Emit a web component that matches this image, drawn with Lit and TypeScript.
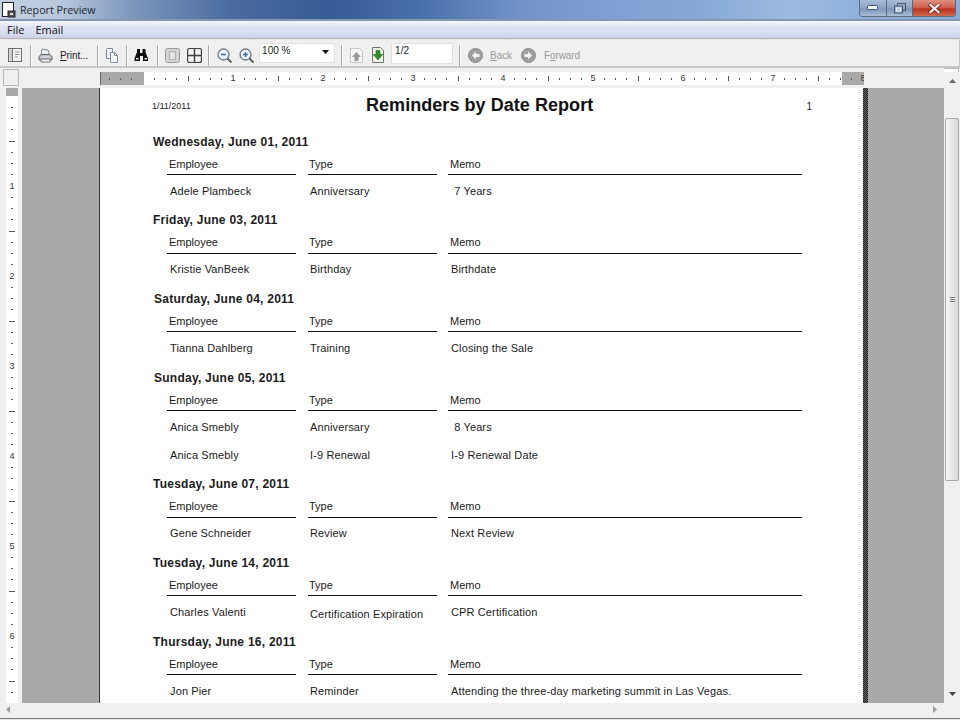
import { LitElement, html, css, svg } from "lit";
import { customElement } from "lit/decorators.js";

type Row = [string, string, string, string?];
interface Group { date: string; shift?: boolean; rows: Row[]; }

const GROUPS: Group[] = [
  { date: "Wednesday, June 01, 2011", rows: [["Adele Plambeck", "Anniversary", " 7 Years"]] },
  { date: "Friday, June 03, 2011", rows: [["Kristie VanBeek", "Birthday", "Birthdate"]] },
  { date: "Saturday, June 04, 2011", shift: true, rows: [["Tianna Dahlberg", "Training", "Closing the Sale"]] },
  { date: "Sunday, June 05, 2011", shift: true, rows: [["Anica Smebly", "Anniversary", " 8 Years"], ["Anica Smebly", "I-9 Renewal", "I-9 Renewal Date"]] },
  { date: "Tuesday, June 07, 2011", rows: [["Gene Schneider", "Review", "Next Review"]] },
  { date: "Tuesday, June 14, 2011", rows: [["Charles Valenti", "Certification Expiration", "CPR Certification", "low"]] },
  { date: "Thursday, June 16, 2011", rows: [["Jon Pier", "Reminder", "Attending the three-day marketing summit in Las Vegas."]] },
];

function tickKind(k: number) {
  if (k % 8 === 0) return "num";
  if (k % 4 === 0) return "half";
  return "dot";
}

@customElement("app-root")
export class AppRoot extends LitElement {
  static styles = css`
    :host { display: flex; flex-direction: column; width: 960px; height: 720px; overflow: hidden; background: #f0f0f0; font-family: "Liberation Sans", Arial, sans-serif; color: #1c1c1c; }
    svg { display: block; flex: none; }

    .titlebar { height: 21px; flex: none; display: flex; align-items: flex-start; box-sizing: border-box; border-bottom: 2px solid #8497b0;
      background: linear-gradient(90deg, #c3d0e2 0, #b9c9de 60px, #7e98bd 130px, #4a6c9f 230px, #375b94 330px, #4a70aa 420px, #7193c8 520px, #7d9fd2 600px, #86a9d8 700px, #9dbbe0 790px, #8fb1dc 860px, #8aacd8 960px); }
    .app-icon { margin: 2px 0 0 2px; }
    .win-title { margin: 3px 0 0 4px; font: 10.7px/14px "Open Sans", sans-serif; color: #1e2630; }
    .win-btns { margin-left: auto; margin-right: 4px; display: flex; height: 16px; border: 1px solid #5a6b80; border-top: 0; border-radius: 0 0 4px 4px; overflow: hidden; }
    .wbtn { height: 16px; display: flex; align-items: center; justify-content: center; background: linear-gradient(#a9bdd8, #8ba3c4 50%, #7b95b8 55%, #a8bdd6); }
    .wbtn.min { width: 26px; border-right: 1px solid #5a6b80; }
    .wbtn.max { width: 25px; border-right: 1px solid #5a6b80; }
    .wbtn.close { width: 42px; background: linear-gradient(#dd9080, #cf5a46 50%, #b8301c 55%, #cf6a50); }

    .menubar { height: 17px; flex: none; display: flex; gap: 11px; padding-left: 7px; align-items: center; border-bottom: 1px solid #b4b4b8; background: linear-gradient(#f4f6fb 0, #dfe4f4 35%, #d4daee 80%, #ccd2e4 100%); font: 11px/15px "Open Sans", sans-serif; color: #111; }

    .toolbar { height: 22px; padding-top: 4px; flex: none; display: flex; align-items: center; border-top: 1px solid #e8e8e8; border-right: 1px solid #c4c4c4; border-bottom: 2px solid #c8c8c8; background: #f0f0f0; padding-left: 8px; }
    .sep { width: 1px; height: 21px; background: #aaa; box-shadow: 1px 0 0 #fff; flex: none; }
    .lbl { font-size: 10px; letter-spacing: -0.1px; color: #222; white-space: nowrap; }
    .lbl.dis { color: #9a9a9a; }
    .lbl u { text-underline-offset: 1px; }
    .box { background: #fff; height: 20px; box-sizing: border-box; border: 1px solid #e2e2e2; font-size: 10px; line-height: 14px; padding-left: 2px; color: #222; display: flex; flex: none; margin-top: -5px; }
    .combo { width: 76px; }
    .combo svg { margin: 6px 5px 0 auto; }
    .pager { width: 62px; height: 21px; padding-left: 3px; margin-top: -3px; }

    .workspace { flex: 1; min-height: 0; display: flex; }
    .content { flex: 1; min-width: 0; display: flex; flex-direction: column; }

    .rulerrow { height: 20px; flex: none; display: flex; background: #f0f0f0; }
    .corner { width: 14px; height: 15px; margin: 1px 0 0 3px; border: 1px solid #b8b8b8; background: #f0f0f0; flex: none; }
    .hruler { margin: 4px 0 0 81px; width: 764px; height: 13px; background: #fff; position: relative; display: flex; overflow: hidden; }
    .hcells { display: flex; margin-left: 3.625px; position: relative; z-index: 1; }
    .hc { width: 11.25px; flex: none; display: flex; align-items: center; justify-content: center; font-size: 9px; line-height: 13px; color: #333; }
    .dot { width: 1px; height: 2px; background: #555; }
    .half { width: 1px; height: 5px; background: #555; }
    .grayL, .grayR { position: absolute; top: 0; bottom: 0; background: #a9a9a9; }
    .grayL { left: 0; width: 44px; border-left: 1px solid #666; box-sizing: border-box; }
    .grayR { right: 0; width: 22px; }

    .body { flex: 1; min-height: 0; display: flex; overflow: hidden; }
    .vruler { width: 22px; flex: none; box-sizing: border-box; padding-left: 6px; background: #f0f0f0; overflow: hidden; }
    .vinner { width: 12px; height: 100%; background: #fff; }
    .vgray { height: 8px; background: #a9a9a9; }
    .vcells { margin-top: -5.625px; }
    .vc { height: 11.25px; display: flex; align-items: center; justify-content: center; font-size: 9px; line-height: 11px; color: #333; }
    .vdot { width: 2px; height: 1px; background: #555; }
    .vhalf { width: 6px; height: 1px; background: #555; }

    .area { flex: 1; min-width: 0; background: #a9a9a9; padding-left: 77px; overflow: hidden; }
    .page { display: flex; width: 769px; min-height: 100%; background: #fff; border-left: 1px solid #333; box-sizing: border-box; color: #1a1a1a; }
    .sheet { width: 763px; flex: none; }
    .edge { width: 5px; flex: none; background: repeating-conic-gradient(#1e1e1e 0 25%, #6a6a6a 0 50%) 0 0 / 2px 2px; }
    .rep-head { display: grid; grid-template-columns: 214px auto 1fr; height: 42.7px; padding: 0 50px 0 52px; box-sizing: border-box; }
    .rep-date { font-size: 9px; line-height: 12px; padding-top: 12px; }
    .rep-title { font-size: 18px; font-weight: 700; letter-spacing: 0.05px; line-height: 22px; padding-top: 6px; color: #111; }
    .rep-no { font-size: 10px; line-height: 12px; padding-top: 13px; text-align: right; padding-right: 1px; }

    .group { padding: 0 0 3.7px 53px; }
    .g-date { height: 22px; line-height: 22.4px; font-size: 12px; font-weight: 700; letter-spacing: 0.25px; color: #1c1c1c; }
    .g-date.shift { padding-left: 1px; }
    .colhead { display: grid; grid-template-columns: 141px 140px 354px; height: 22.3px; margin: 0 0 2.7px 14px; }
    .colhead div { font-size: 11px; line-height: 22.2px; height: 22.3px; box-sizing: border-box; border-bottom: 1px solid #111; padding-left: 2px; }
    .colhead .c1 { margin-right: 12px; }
    .colhead .c2 { margin-right: 11px; padding-left: 1px; }
    .row { display: grid; grid-template-columns: 141px 140px 354px; height: 28px; margin-left: 14px; font-size: 11px; letter-spacing: 0.13px; line-height: 27.2px; white-space: pre; }
    .row > div { padding-left: 3px; }
    .row > .c2 { padding-left: 2px; }
    .row.low > .c2 { padding-top: 1.5px; }

    .vscroll { width: 16px; flex: none; display: flex; flex-direction: column; background: #f0f0f0; align-items: center; position: relative; }
    .scrollcorner { position: absolute; right: 1px; top: 0; width: 15px; height: 4px; border: 1px solid #bbb; border-bottom: 0; border-left: 0; box-sizing: border-box; background: #fff; }
    .vthumb { margin-top: 35px; width: 14px; height: 363px; box-sizing: border-box; border: 1px solid #a8a8a8; border-radius: 2px; background: linear-gradient(90deg, #f4f4f4, #e8e8e8 50%, #d8d8d8); display: flex; align-items: center; justify-content: center; }
    .grip { width: 5px; height: 5px; background: repeating-linear-gradient(#777 0 1px, #eee 1px 2px); }
    .varrow-up { margin-top: 11px; }
    .varrow-dn { margin-top: auto; margin-bottom: 7px; }

    .hscroll { height: 13px; flex: none; display: flex; align-items: center; justify-content: space-between; padding: 0 23px 0 6px; background: #f0f0f0; }
    .strip { height: 1px; flex: none; margin-top: 2px; border-top: 1px solid #7a7a7a; background: #e4e4e4; }
  `;

  private spacer(w: number) { return html`<span style="width:${w}px;flex:none"></span>`; }

  private hruler() {
    const cells = [];
    for (let k = -3; k <= 64; k++) {
      const kind = tickKind(k);
      cells.push(html`<div class="hc">${kind === "num" ? (k === 0 ? "" : k / 8) : kind === "half" ? html`<span class="half"></span>` : html`<span class="dot"></span>`}</div>`);
    }
    return cells;
  }

  private vruler() {
    const cells = [];
    for (let k = 0; k <= 54; k++) {
      const kind = tickKind(k);
      cells.push(html`<div class="vc">${kind === "num" ? (k === 0 ? "" : k / 8) : kind === "half" ? html`<span class="vhalf"></span>` : html`<span class="vdot"></span>`}</div>`);
    }
    return cells;
  }

  private icons = {
    app: svg`<rect x=".5" y=".5" width="11" height="14" fill="#fff" stroke="#222"/><rect x="6" y="9" width="7" height="6" fill="#555" stroke="#222"/><rect x="8" y="11" width="3" height="2" fill="#ddd"/>`,
    panel: svg`<rect x=".5" y=".5" width="13" height="13" fill="#f2f2f2" stroke="#6a6a6a"/><rect x="1.500" y="1.500" width="3" height="11" fill="#c9c9c9"/><path d="M4.500 1v12" stroke="#777"/><path d="M7 4h4.500M7 6.500h4.500M7 9h3" stroke="#999"/>`,
    printer: svg`<path d="M4 1l6 1 1.500 5H3z" fill="#e8eef4" stroke="#7f8a96"/><path d="M1 8.500 3 6.500h9l2 2v3.500H1z" fill="#b8bcc2" stroke="#666"/><path d="M3 11h9v3H3z" fill="#f4f4f4" stroke="#777"/><ellipse cx="7.500" cy="9" rx="5" ry=".8" fill="#dfe3e8"/>`,
    copy: svg`<path d="M.5 1.500a1 1 0 0 1 1-1h5v10h-6z" fill="#f0f2f6" stroke="#7f8ca0"/><path d="M4.500 4.500h4l3 3v7h-7z" fill="#fff" stroke="#7f8ca0"/><path d="M8.500 4.500v3h3" fill="none" stroke="#7f8ca0"/>`,
    binoc: svg`<path d="M3 1h3v4h2.500V1h3v3l2.500 6.500V13H9V8H6v5H.5v-2.500L3 4z" fill="#111"/><rect x="2" y="10" width="2.500" height="1.500" fill="#eee"/><rect x="10.500" y="10" width="2.500" height="1.500" fill="#eee"/>`,
    single: svg`<rect x=".5" y=".5" width="14" height="14" rx="2" fill="#d4d4d4" stroke="#9a9a9a"/><rect x="4.500" y="3.500" width="6" height="8" fill="#e4e4e4" stroke="#b0b0b0"/>`,
    grid: svg`<rect x=".5" y=".5" width="14" height="14" rx="2" fill="#e6e6e6" stroke="#444" stroke-width="1.200"/><path d="M7.500 1v13M1 7.500h13" stroke="#444" stroke-width="1.400"/><rect x="2.500" y="2.500" width="3.500" height="3.500" fill="#fafafa"/><rect x="9" y="2.500" width="3.500" height="3.500" fill="#fafafa"/><rect x="2.500" y="9" width="3.500" height="3.500" fill="#fafafa"/><rect x="9" y="9" width="3.500" height="3.500" fill="#fafafa"/>`,
    zoomOut: svg`<circle cx="6.500" cy="6.500" r="5.500" fill="#eef2f6" stroke="#6c7a88" stroke-width="1.300"/><path d="M4 6.500h5" stroke="#3e6da8" stroke-width="1.600"/><path d="M10.500 10.500l4 4" stroke="#555" stroke-width="1.800"/>`,
    zoomIn: svg`<circle cx="6.500" cy="6.500" r="5.500" fill="#eef2f6" stroke="#6c7a88" stroke-width="1.300"/><path d="M4 6.500h5M6.500 4v5" stroke="#3e6da8" stroke-width="1.600"/><path d="M10.500 10.500l4 4" stroke="#555" stroke-width="1.800"/>`,
    caret: svg`<path d="M0 0h7L3.500 4z" fill="#111"/>`,
    pageUp: svg`<path d="M.5.500h9l3 3v11H.5z" fill="#f6f6f6" stroke="#c4c4c4"/><path d="M6.500 4 11 9H8.500v4h-4V9H2z" fill="#9a9a9a"/>`,
    pageDn: svg`<path d="M.5.500h8l3 3v12H.5z" fill="#f4f6ee" stroke="#6d7566"/><path d="M4 3.500h4v4h2.800L6 13 1.200 7.500H4z" fill="#2f8f2f" stroke="#1f6a1f" stroke-width=".6"/>`,
    back: svg`<circle cx="7.500" cy="7.500" r="7" fill="#9e9e9e" stroke="#8a8a8a"/><path d="M8 3.500 4 7.500l4 4V9h3.500V6H8z" fill="#f2f2f2"/>`,
    fwd: svg`<circle cx="7.500" cy="7.500" r="7" fill="#9e9e9e" stroke="#8a8a8a"/><path d="M7 3.500l4 4-4 4V9H3.500V6H7z" fill="#f2f2f2"/>`,
  };

  private group(g: Group) {
    return html`<section class="group">
      <div class="g-date ${g.shift ? "shift" : ""}">${g.date}</div>
      <div class="colhead"><div class="c1">Employee</div><div class="c2">Type</div><div class="c3">Memo</div></div>
      ${g.rows.map((r) => html`<div class="row ${r[3] ?? ""}"><div class="c1">${r[0]}</div><div class="c2">${r[1]}</div><div class="c3">${r[2]}</div></div>`)}
    </section>`;
  }

  render() {
    const i = this.icons;
    return html`
      <header class="titlebar">
        <svg class="app-icon" width="14" height="16" viewBox="0 0 14 16">${i.app}</svg>
        <span class="win-title">Report Preview</span>
        <div class="win-btns">
          <div class="wbtn min"><svg width="12" height="6" viewBox="0 0 12 6"><rect x=".5" y=".5" width="10" height="4" rx="1" fill="#eef3f8" stroke="#45566c"/></svg></div>
          <div class="wbtn max"><svg width="12" height="11" viewBox="0 0 12 11"><rect x="3.500" y=".5" width="8" height="7" fill="none" stroke="#45566c"/><rect x=".5" y="3" width="8" height="7" fill="#a6b9d2" stroke="#45566c"/><rect x="2.500" y="5" width="4" height="3" fill="none" stroke="#eef3f8"/></svg></div>
          <div class="wbtn close"><svg width="15" height="11" viewBox="0 0 15 11"><path d="M2 1l11 9M13 1 2 10" stroke="#5a1a10" stroke-width="3.600"/><path d="M2.500 1.200l10 8.600M12.500 1.200l-10 8.600" stroke="#f6ecea" stroke-width="2.200"/></svg></div>
        </div>
      </header>
      <nav class="menubar"><span>File</span><span>Email</span></nav>
      <div class="toolbar">
        <svg width="14" height="14" viewBox="0 0 14 14">${i.panel}</svg>${this.spacer(8)}<span class="sep"></span>${this.spacer(7)}
        <svg width="15" height="15" viewBox="0 0 15 15">${i.printer}</svg>${this.spacer(7)}<span class="lbl"><u>P</u>rint...</span>${this.spacer(9)}<span class="sep"></span>${this.spacer(8)}
        <svg width="12" height="15" viewBox="0 0 12 15">${i.copy}</svg>${this.spacer(8)}<span class="sep"></span>${this.spacer(7)}
        <svg width="15" height="14" viewBox="0 0 15 14">${i.binoc}</svg>${this.spacer(8)}<span class="sep"></span>${this.spacer(7)}
        <svg width="15" height="15" viewBox="0 0 15 15">${i.single}</svg>${this.spacer(7)}
        <svg width="15" height="15" viewBox="0 0 15 15">${i.grid}</svg>${this.spacer(6)}<span class="sep"></span>${this.spacer(8)}
        <svg width="15" height="15" viewBox="0 0 15 15">${i.zoomOut}</svg>${this.spacer(7)}
        <svg width="15" height="15" viewBox="0 0 15 15">${i.zoomIn}</svg>${this.spacer(5)}
        <div class="box combo">100 %<svg width="7" height="4" viewBox="0 0 7 4">${i.caret}</svg></div>${this.spacer(6)}<span class="sep"></span>${this.spacer(8)}
        <svg width="13" height="15" viewBox="0 0 13 15">${i.pageUp}</svg>${this.spacer(9)}
        <svg width="12" height="16" viewBox="0 0 12 16">${i.pageDn}</svg>${this.spacer(7)}
        <div class="box pager">1/2</div>${this.spacer(6)}<span class="sep"></span>${this.spacer(8)}
        <svg width="15" height="15" viewBox="0 0 15 15">${i.back}</svg>${this.spacer(7)}<span class="lbl dis"><u>B</u>ack</span>${this.spacer(9)}
        <svg width="15" height="15" viewBox="0 0 15 15">${i.fwd}</svg>${this.spacer(8)}<span class="lbl dis">F<u>o</u>rward</span>
      </div>
      <div class="workspace">
        <div class="content">
          <div class="rulerrow">
            <div class="corner"></div>
            <div class="hruler"><div class="grayL"></div><div class="grayR"></div><div class="hcells">${this.hruler()}</div></div>
          </div>
          <div class="body">
            <div class="vruler"><div class="vinner"><div class="vgray"></div><div class="vcells">${this.vruler()}</div></div></div>
            <main class="area"><div class="page"><div class="sheet">
              <div class="rep-head"><div class="rep-date">1/11/2011</div><div class="rep-title">Reminders by Date Report</div><div class="rep-no">1</div></div>
              ${GROUPS.map((g) => this.group(g))}
            </div><div class="edge"></div></div></main>
          </div>
        </div>
        <aside class="vscroll">
          <div class="scrollcorner"></div>
          <svg class="varrow-up" width="7" height="4" viewBox="0 0 7 4"><path d="M0 4h7L3.500 0z" fill="#666"/></svg>
          <div class="vthumb"><span class="grip"></span></div>
          <svg class="varrow-dn" width="7" height="4" viewBox="0 0 7 4"><path d="M0 0h7L3.500 4z" fill="#444"/></svg>
        </aside>
      </div>
      <div class="hscroll">
        <svg width="4" height="7" viewBox="0 0 4 7"><path d="M4 0v7L0 3.500z" fill="#999"/></svg>
        <svg width="4" height="7" viewBox="0 0 4 7"><path d="M0 0v7l4-3.500z" fill="#999"/></svg>
      </div>
      <div class="strip"></div>
    `;
  }
}
